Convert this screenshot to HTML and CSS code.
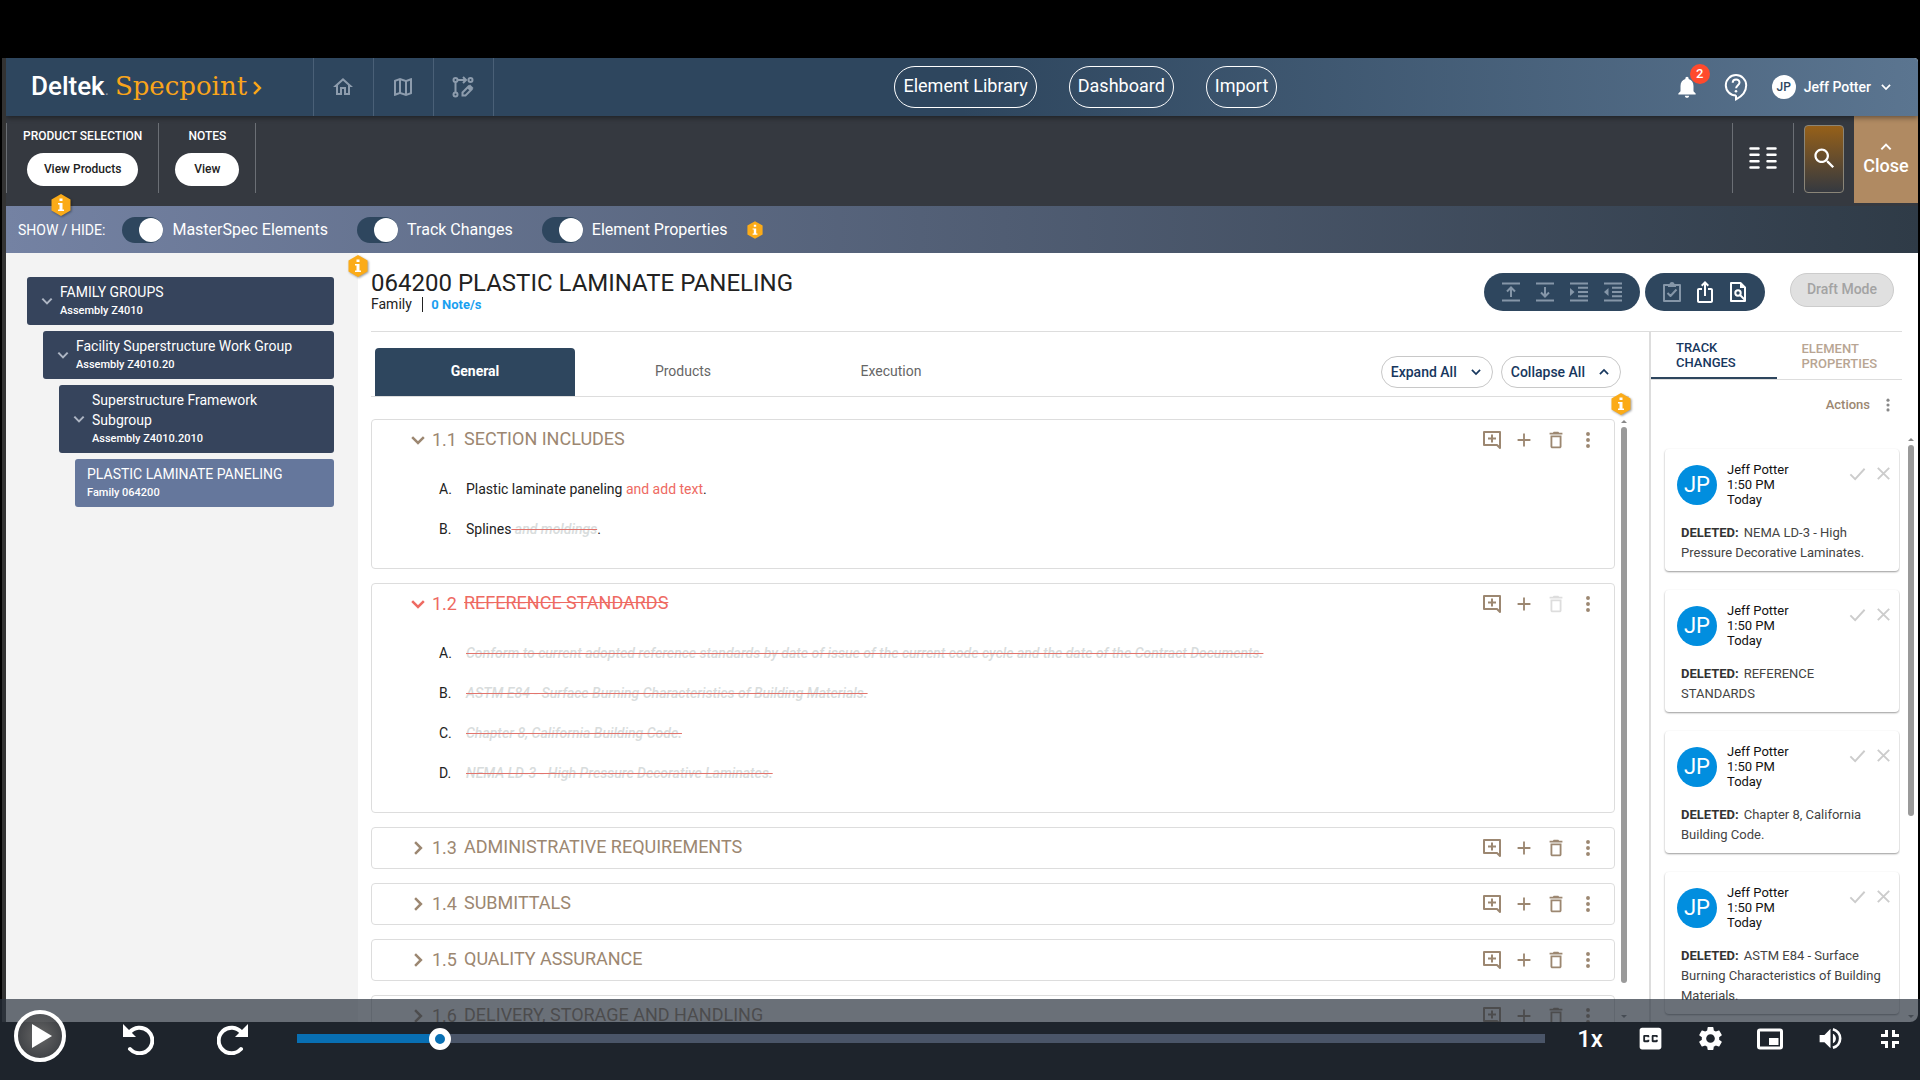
FILE: index.html
```html
<!DOCTYPE html>
<html lang="en">
<head>
    <meta charset="UTF-8">
    <meta name="viewport" content="width=device-width, initial-scale=1.0">
    <title>Deltek Specpoint</title>
    <link rel="stylesheet" href="styles.css">
</head>
<body>
    <!-- icon set -->
    <svg class="sprite" aria-hidden="true">
        <symbol id="i-home" viewBox="0 0 24 24"><path d="M12 5.69l5 4.5V18h-2v-6H9v6H7v-7.81l5-4.5M12 3L2 12h3v8h6v-6h2v6h6v-8h3L12 3z"/></symbol>
        <symbol id="i-map" viewBox="0 0 24 24"><path d="M20.5 3l-.16.03L15 5.1 9 3 3.36 4.9c-.21.07-.36.25-.36.48V20.5c0 .28.22.5.5.5l.16-.03L9 18.9l6 2.1 5.64-1.9c.21-.07.36-.25.36-.48V3.5c0-.28-.22-.5-.5-.5zM10 5.47l4 1.4v11.66l-4-1.4V5.47zm-5 .99l3-1.01v11.7l-3 1.16V6.46zm14 11.08l-3 1.01V6.86l3-1.16v11.84z"/></symbol>
        <symbol id="i-flow" viewBox="0 0 24 24"><g fill="none" stroke="currentColor" stroke-width="2"><circle cx="4.5" cy="5" r="2"/><circle cx="19.5" cy="5" r="2"/><circle cx="4.5" cy="19.500" r="2"/><path d="M4.500 7v10.500M7 5h7.500M12 2l3 3-3 3"/><path d="M11.500 20.500v-3l6-6 3 3-6 6zM16.500 12l3.500 3.500"/></g><path d="M17 11.500l2-2 3.500 3.500-2 2z"/></symbol>
        <symbol id="i-bell" viewBox="0 0 24 24"><path d="M12 22c1.1 0 2-.9 2-2h-4c0 1.1.9 2 2 2zm6-6v-5c0-3.070-1.630-5.640-4.500-6.320V4c0-.83-.67-1.500-1.500-1.500s-1.500.67-1.500 1.500v.68C7.640 5.360 6 7.920 6 11v5l-2 2v1h16v-1l-2-2z"/></symbol>
        <symbol id="i-help" viewBox="0 0 24 28"><g fill="none" stroke="currentColor" stroke-width="2"><path d="M12 22.500A10.200 10.200 0 1 1 22.200 12.300c0 6-4 11-10.200 14v-4"/><path d="M8.700 9.800c0-4.500 6.800-4.300 6.800-.3 0 2.600-3.400 2.800-3.400 5.800"/></g><circle cx="12" cy="18.300" r="1.300"/></symbol>
        <symbol id="i-down" viewBox="0 0 24 24"><path fill="none" stroke="currentColor" stroke-width="3" d="M5 8.500l7 7 7-7"/></symbol>
        <symbol id="i-up" viewBox="0 0 24 24"><path fill="none" stroke="currentColor" stroke-width="3" d="M5 15.500l7-7 7 7"/></symbol>
        <symbol id="i-right" viewBox="0 0 24 24"><path fill="none" stroke="currentColor" stroke-width="3" d="M8.500 5l7 7-7 7"/></symbol>
        <symbol id="i-columns" viewBox="0 0 28 22"><path fill="none" stroke="currentColor" stroke-width="2.500" stroke-linecap="round" d="M1.500 1.500h8M1.500 7.800h8M1.500 14.200h8M1.500 20.500h8M18.500 1.500h8M18.500 7.800h8M18.500 14.200h8M18.500 20.500h8"/></symbol>
        <symbol id="i-search" viewBox="0 0 24 24"><path d="M15.500 14h-.79l-.28-.27C15.410 12.590 16 11.110 16 9.500 16 5.910 13.090 3 9.500 3S3 5.910 3 9.500 5.910 16 9.500 16c1.610 0 3.090-.59 4.230-1.570l.27.28v.79l5 4.990L20.490 19l-4.990-5zm-6 0C7.010 14 5 11.990 5 9.500S7.010 5 9.500 5 14 7.010 14 9.500 11.990 14 9.500 14z"/></symbol>
        <symbol id="i-insert-above" viewBox="0 0 20 20"><path fill="none" stroke="currentColor" stroke-width="2" d="M1 1.500h18M1 18.500h18M10 15V6M6 9.500l4-4 4 4"/></symbol>
        <symbol id="i-insert-below" viewBox="0 0 20 20"><path fill="none" stroke="currentColor" stroke-width="2" d="M1 1.500h18M1 18.500h18M10 5v9M6 10.500l4 4 4-4"/></symbol>
        <symbol id="i-indent" viewBox="0 0 20 20"><path fill="none" stroke="currentColor" stroke-width="2" d="M1 1.500h18M9 5.800h10M9 10h10M9 14.200h10M1 18.500h18"/><path d="M1 6l4.500 4L1 14z"/></symbol>
        <symbol id="i-outdent" viewBox="0 0 20 20"><path fill="none" stroke="currentColor" stroke-width="2" d="M1 1.500h18M9 5.800h10M9 10h10M9 14.200h10M1 18.500h18"/><path d="M5.500 6L1 10l4.500 4z"/></symbol>
        <symbol id="i-task" viewBox="0 0 20 20"><path fill="none" stroke="currentColor" stroke-width="2" stroke-linejoin="round" d="M2 3h16v16H2zM5.500 11l3 3 6-6.500"/><path d="M6 3h8v2H6zM10 0a2.500 2.500 0 0 1 2.500 2.500h-5A2.500 2.500 0 0 1 10 0z"/></symbol>
        <symbol id="i-share" viewBox="0 0 24 24"><path d="M16 5l-1.420 1.420-1.590-1.590V16h-1.980V4.830L9.420 6.420 8 5l4-4 4 4zm4 5v11c0 1.100-.9 2-2 2H6c-1.110 0-2-.9-2-2V10c0-1.110.89-2 2-2h3v2H6v11h12V10h-3V8h3c1.100 0 2 .89 2 2z"/></symbol>
        <symbol id="i-find" viewBox="0 0 20 20"><g fill="none" stroke="currentColor" stroke-width="2" stroke-linejoin="round"><path d="M3 1h9.500L17 5.500V19H3z"/><circle cx="10" cy="11" r="2.700"/><path d="M12 13l4.500 4.500"/></g><path d="M12 1l5 5h-5z"/></symbol>
        <symbol id="i-comment" viewBox="-1 -1 22 22"><path fill="none" stroke="currentColor" stroke-width="2" stroke-linejoin="round" d="M2 2h16v16l-3-3H2zM10 4.500v8M6 8.500h8"/></symbol>
        <symbol id="i-plus" viewBox="0 0 24 24"><path d="M19 13h-6v6h-2v-6H5v-2h6V5h2v6h6v2z"/></symbol>
        <symbol id="i-trash" viewBox="0 0 24 24"><path d="M6 19c0 1.100.9 2 2 2h8c1.100 0 2-.9 2-2V7H6v12zM8 9h8v10H8V9zm7.500-5l-1-1h-5l-1 1H5v2h14V4h-3.500z"/></symbol>
        <symbol id="i-more" viewBox="0 0 24 24"><circle cx="12" cy="5.500" r="2.100"/><circle cx="12" cy="12" r="2.100"/><circle cx="12" cy="18.500" r="2.100"/></symbol>
        <symbol id="i-check" viewBox="0 0 20 20"><path fill="none" stroke="currentColor" stroke-width="2" d="M2.500 11l5 5L17.500 5"/></symbol>
        <symbol id="i-x" viewBox="0 0 20 20"><path fill="none" stroke="currentColor" stroke-width="2" d="M4 4l12 12M16 4L4 16"/></symbol>
        <symbol id="i-info" viewBox="0 0 20 22"><path fill="#fbab18" d="M10 0l9.500 5.500v11L10 22 .5 16.500v-11z"/><path fill="#fff" d="M8.500 4.500h3v2.500h-3zM7 9h4.500v6.500H13V17H7v-1.500h1.500v-5H7z"/></symbol>
        <symbol id="i-play" viewBox="0 0 20 24"><path d="M0 0l20 12L0 24z"/></symbol>
        <symbol id="i-back" viewBox="0 0 32 32"><path fill="none" stroke="currentColor" stroke-width="4" stroke-linecap="round" d="M7.500 9.500a12.800 12.800 0 1 1 .5 16.500"/><path d="M1 1v13h13z"/></symbol>
        <symbol id="i-forward" viewBox="0 0 32 32"><path fill="none" stroke="currentColor" stroke-width="4" stroke-linecap="round" d="M24.500 9.500a12.800 12.800 0 1 0-.5 16.500"/><path d="M31 1v13H18z"/></symbol>
        <symbol id="i-cc" viewBox="0 0 24 24"><path d="M19 3H5c-1.110 0-2 .9-2 2v14c0 1.100.89 2 2 2h14c1.100 0 2-.9 2-2V5c0-1.100-.9-2-2-2zm-8 8H9.500v-.5h-2v3h2V13H11v1c0 .55-.45 1-1 1H7c-.55 0-1-.45-1-1v-4c0-.55.45-1 1-1h3c.55 0 1 .45 1 1v1zm7 0h-1.500v-.5h-2v3h2V13H18v1c0 .55-.45 1-1 1h-3c-.55 0-1-.45-1-1v-4c0-.55.45-1 1-1h3c.55 0 1 .45 1 1v1z"/></symbol>
        <symbol id="i-gear" viewBox="0 0 24 24"><path d="M19.140 12.940c.04-.3.06-.61.06-.94 0-.32-.02-.64-.07-.94l2.030-1.580c.18-.14.23-.41.12-.61l-1.920-3.320c-.12-.22-.37-.29-.59-.22l-2.390.96c-.5-.38-1.030-.7-1.620-.94l-.36-2.540c-.04-.24-.24-.41-.48-.41h-3.840c-.24 0-.43.17-.47.41l-.36 2.540c-.59.24-1.130.57-1.620.94l-2.390-.96c-.22-.08-.47 0-.59.22L2.740 8.870c-.12.21-.08.47.12.61l2.030 1.580c-.05.3-.09.63-.09.94s.02.64.07.94l-2.030 1.580c-.18.14-.23.41-.12.61l1.920 3.320c.12.22.37.29.59.22l2.390-.96c.5.38 1.030.7 1.620.94l.36 2.540c.05.24.24.41.48.41h3.840c.24 0 .44-.17.47-.41l.36-2.540c.59-.24 1.130-.56 1.620-.94l2.390.96c.22.08.47 0 .59-.22l1.920-3.320c.12-.22.07-.47-.12-.61l-2.010-1.580zM12 15.600c-1.980 0-3.600-1.620-3.600-3.600s1.620-3.600 3.600-3.600 3.600 1.620 3.600 3.600-1.620 3.600-3.600 3.600z"/></symbol>
        <symbol id="i-pip" viewBox="0 0 26 22"><rect x="1.500" y="2" width="23" height="18" rx="1.500" fill="none" stroke="currentColor" stroke-width="3"/><path d="M12 10h9.500v7H12z"/></symbol>
        <symbol id="i-volume" viewBox="0 0 24 24"><path d="M3 9v6h4l5 5V4L7 9H3zm13.500 3c0-1.770-1.020-3.290-2.500-4.030v8.050c1.480-.73 2.500-2.250 2.500-4.020z"/><path fill="none" stroke="currentColor" stroke-width="2.200" d="M14 4.300c3.500 1 6 4 6 7.700s-2.500 6.700-6 7.700"/></symbol>
        <symbol id="i-exit" viewBox="0 0 18 18"><path fill="none" stroke="currentColor" stroke-width="3" d="M0 5.500h5.500V0M18 5.500h-5.500V0M0 12.500h5.500V18M18 12.500h-5.500V18"/></symbol>
    </svg>

    <div class="app">
        <header class="header">
            <a class="logo" href="#"><span class="logo-deltek">Deltek</span><span class="logo-dot">.</span><span class="logo-specpoint">Specpoint</span><svg class="logo-arrow"><use href="#i-right"/></svg></a>
            <nav class="icon-nav">
                <a href="#" aria-label="Home"><svg class="icon-24"><use href="#i-home"/></svg></a>
                <a href="#" aria-label="Map"><svg class="icon-24"><use href="#i-map"/></svg></a>
                <a href="#" aria-label="Workflow"><svg class="icon-24"><use href="#i-flow"/></svg></a>
            </nav>
            <div class="header-links">
                <button>Element Library</button>
                <button>Dashboard</button>
                <button>Import</button>
            </div>
            <div class="user-area">
                <button class="bell" aria-label="Notifications"><svg><use href="#i-bell"/></svg><span class="badge">2</span></button>
                <button class="help" aria-label="Help"><svg><use href="#i-help"/></svg></button>
                <button class="user"><span class="user-initials">JP</span>Jeff Potter<svg class="icon-14"><use href="#i-down"/></svg></button>
            </div>
        </header>

        <div class="toolbar">
            <div class="tool-group">
                <span>PRODUCT SELECTION</span>
                <button>View Products</button>
                <svg class="info info-products"><use href="#i-info"/></svg>
            </div>
            <div class="tool-group">
                <span>NOTES</span>
                <button>View</button>
            </div>
            <div class="toolbar-right">
                <button class="columns" aria-label="Columns"><svg><use href="#i-columns"/></svg></button>
                <button class="search" aria-label="Search"><svg><use href="#i-search"/></svg></button>
                <button class="close"><svg class="icon-16"><use href="#i-up"/></svg>Close</button>
            </div>
        </div>

        <div class="show-hide">
            <span class="show-hide-title">SHOW / HIDE:</span>
            <label><input type="checkbox" checked>MasterSpec Elements</label>
            <label><input type="checkbox" checked>Track Changes</label>
            <label><input type="checkbox" checked>Element Properties</label>
            <svg class="info-small"><use href="#i-info"/></svg>
        </div>

        <div class="content">
            <aside class="sidebar">
                <a href="#" class="node level-1"><svg class="icon-16"><use href="#i-down"/></svg><span class="node-text">FAMILY GROUPS<small>Assembly Z4010</small></span></a>
                <a href="#" class="node level-2"><svg class="icon-16"><use href="#i-down"/></svg><span class="node-text">Facility Superstructure Work Group<small>Assembly Z4010.20</small></span></a>
                <a href="#" class="node level-3"><svg class="icon-16"><use href="#i-down"/></svg><span class="node-text">Superstructure Framework Subgroup<small>Assembly Z4010.2010</small></span></a>
                <a href="#" class="node level-4"><span class="node-text">PLASTIC LAMINATE PANELING<small>Family 064200</small></span></a>
            </aside>

            <main class="main">
                <svg class="info info-main"><use href="#i-info"/></svg>
                <div class="main-header">
                    <div class="title">
                        <h1>064200 PLASTIC LAMINATE PANELING</h1>
                        <p>Family <a href="#">0 Note/s</a></p>
                    </div>
                    <div class="pill pill-wide">
                        <button disabled aria-label="Insert above"><svg><use href="#i-insert-above"/></svg></button>
                        <button disabled aria-label="Insert below"><svg><use href="#i-insert-below"/></svg></button>
                        <button disabled aria-label="Demote"><svg><use href="#i-indent"/></svg></button>
                        <button disabled aria-label="Promote"><svg><use href="#i-outdent"/></svg></button>
                    </div>
                    <div class="pill">
                        <button disabled aria-label="Accept all"><svg><use href="#i-task"/></svg></button>
                        <button aria-label="Export"><svg class="share"><use href="#i-share"/></svg></button>
                        <button aria-label="Preview"><svg><use href="#i-find"/></svg></button>
                    </div>
                    <button class="draft" disabled>Draft Mode</button>
                </div>

                <div class="workspace">
                    <div class="editor">
                        <div class="tabs">
                            <button class="tab active">General</button>
                            <button class="tab">Products</button>
                            <button class="tab">Execution</button>
                            <div class="expanders">
                                <button>Expand All<svg class="icon-14"><use href="#i-down"/></svg></button>
                                <button>Collapse All<svg class="icon-14"><use href="#i-up"/></svg></button>
                            </div>
                        </div>
                        <svg class="info info-editor"><use href="#i-info"/></svg>

                        <div class="scroll-area">
                            <div class="sections">
                                <section>
                                    <div class="section-head">
                                        <svg class="icon-20"><use href="#i-down"/></svg><span class="number">1.1</span><h2>SECTION INCLUDES</h2>
                                        <button aria-label="Add comment"><svg><use href="#i-comment"/></svg></button>
                                        <button aria-label="Add"><svg><use href="#i-plus"/></svg></button>
                                        <button aria-label="Delete"><svg><use href="#i-trash"/></svg></button>
                                        <button aria-label="More"><svg><use href="#i-more"/></svg></button>
                                    </div>
                                    <ol>
                                        <li><span>A.</span>Plastic laminate paneling <ins>and add text</ins>.</li>
                                        <li><span>B.</span>Splines<del> and moldings</del>.</li>
                                    </ol>
                                </section>
                                <section>
                                    <div class="section-head removed">
                                        <svg class="icon-20"><use href="#i-down"/></svg><span class="number">1.2</span><h2>REFERENCE STANDARDS</h2>
                                        <button aria-label="Add comment"><svg><use href="#i-comment"/></svg></button>
                                        <button aria-label="Add"><svg><use href="#i-plus"/></svg></button>
                                        <button aria-label="Delete" disabled><svg><use href="#i-trash"/></svg></button>
                                        <button aria-label="More"><svg><use href="#i-more"/></svg></button>
                                    </div>
                                    <ol>
                                        <li><span>A.</span><del>Conform to current adopted reference standards by date of issue of the current code cycle and the date of the Contract Documents.</del></li>
                                        <li><span>B.</span><del>ASTM E84 - Surface Burning Characteristics of Building Materials.</del></li>
                                        <li><span>C.</span><del>Chapter 8, California Building Code.</del></li>
                                        <li><span>D.</span><del>NEMA LD-3 - High Pressure Decorative Laminates.</del></li>
                                    </ol>
                                </section>
                                <section>
                                    <div class="section-head">
                                        <svg class="icon-20"><use href="#i-right"/></svg><span class="number">1.3</span><h2>ADMINISTRATIVE REQUIREMENTS</h2>
                                        <button aria-label="Add comment"><svg><use href="#i-comment"/></svg></button>
                                        <button aria-label="Add"><svg><use href="#i-plus"/></svg></button>
                                        <button aria-label="Delete"><svg><use href="#i-trash"/></svg></button>
                                        <button aria-label="More"><svg><use href="#i-more"/></svg></button>
                                    </div>
                                </section>
                                <section>
                                    <div class="section-head">
                                        <svg class="icon-20"><use href="#i-right"/></svg><span class="number">1.4</span><h2>SUBMITTALS</h2>
                                        <button aria-label="Add comment"><svg><use href="#i-comment"/></svg></button>
                                        <button aria-label="Add"><svg><use href="#i-plus"/></svg></button>
                                        <button aria-label="Delete"><svg><use href="#i-trash"/></svg></button>
                                        <button aria-label="More"><svg><use href="#i-more"/></svg></button>
                                    </div>
                                </section>
                                <section>
                                    <div class="section-head">
                                        <svg class="icon-20"><use href="#i-right"/></svg><span class="number">1.5</span><h2>QUALITY ASSURANCE</h2>
                                        <button aria-label="Add comment"><svg><use href="#i-comment"/></svg></button>
                                        <button aria-label="Add"><svg><use href="#i-plus"/></svg></button>
                                        <button aria-label="Delete"><svg><use href="#i-trash"/></svg></button>
                                        <button aria-label="More"><svg><use href="#i-more"/></svg></button>
                                    </div>
                                </section>
                                <section>
                                    <div class="section-head">
                                        <svg class="icon-20"><use href="#i-right"/></svg><span class="number">1.6</span><h2>DELIVERY, STORAGE AND HANDLING</h2>
                                        <button aria-label="Add comment"><svg><use href="#i-comment"/></svg></button>
                                        <button aria-label="Add"><svg><use href="#i-plus"/></svg></button>
                                        <button aria-label="Delete"><svg><use href="#i-trash"/></svg></button>
                                        <button aria-label="More"><svg><use href="#i-more"/></svg></button>
                                    </div>
                                </section>
                            </div>
                            <div class="scrollbar"><i class="thumb thumb-sections"></i></div>
                        </div>
                    </div>

                    <aside class="changes">
                        <div class="change-tabs">
                            <button class="active">TRACK CHANGES</button>
                            <button>ELEMENT PROPERTIES</button>
                        </div>
                        <div class="actions"><button>Actions<svg><use href="#i-more"/></svg></button></div>
                        <div class="change-scroll">
                            <div class="change-list">
                                <article>
                                    <div class="change-head">
                                        <span class="avatar">JP</span>
                                        <p>Jeff Potter<br>1:50 PM<br>Today</p>
                                        <button aria-label="Accept"><svg><use href="#i-check"/></svg></button>
                                        <button aria-label="Reject"><svg><use href="#i-x"/></svg></button>
                                    </div>
                                    <p class="change-text"><b>DELETED:</b>NEMA LD-3 - High Pressure Decorative Laminates.</p>
                                </article>
                                <article>
                                    <div class="change-head">
                                        <span class="avatar">JP</span>
                                        <p>Jeff Potter<br>1:50 PM<br>Today</p>
                                        <button aria-label="Accept"><svg><use href="#i-check"/></svg></button>
                                        <button aria-label="Reject"><svg><use href="#i-x"/></svg></button>
                                    </div>
                                    <p class="change-text"><b>DELETED:</b>REFERENCE STANDARDS</p>
                                </article>
                                <article>
                                    <div class="change-head">
                                        <span class="avatar">JP</span>
                                        <p>Jeff Potter<br>1:50 PM<br>Today</p>
                                        <button aria-label="Accept"><svg><use href="#i-check"/></svg></button>
                                        <button aria-label="Reject"><svg><use href="#i-x"/></svg></button>
                                    </div>
                                    <p class="change-text"><b>DELETED:</b>Chapter 8, California Building Code.</p>
                                </article>
                                <article>
                                    <div class="change-head">
                                        <span class="avatar">JP</span>
                                        <p>Jeff Potter<br>1:50 PM<br>Today</p>
                                        <button aria-label="Accept"><svg><use href="#i-check"/></svg></button>
                                        <button aria-label="Reject"><svg><use href="#i-x"/></svg></button>
                                    </div>
                                    <p class="change-text"><b>DELETED:</b>ASTM E84 - Surface Burning Characteristics of Building Materials.</p>
                                </article>
                            </div>
                            <div class="scrollbar"><i class="thumb thumb-changes"></i></div>
                        </div>
                    </aside>
                </div>
            </main>
        </div>
    </div>

    <!-- video controls -->
    <div class="player">
        <button class="play" aria-label="Play"><svg><use href="#i-play"/></svg></button>
        <button class="skip" aria-label="Rewind"><svg><use href="#i-back"/></svg></button>
        <button class="skip" aria-label="Forward"><svg><use href="#i-forward"/></svg></button>
        <input class="seek" type="range" min="0" max="1000" value="108" aria-label="Seek">
        <button class="control">1x</button>
        <button class="control" aria-label="Captions"><svg class="icon-29"><use href="#i-cc"/></svg></button>
        <button class="control" aria-label="Settings"><svg class="icon-29"><use href="#i-gear"/></svg></button>
        <button class="control" aria-label="Picture in picture"><svg class="pip"><use href="#i-pip"/></svg></button>
        <button class="control" aria-label="Volume"><svg class="icon-29"><use href="#i-volume"/></svg></button>
        <button class="control" aria-label="Exit fullscreen"><svg class="icon-18"><use href="#i-exit"/></svg></button>
    </div>
</body>
</html>
```

FILE: styles.css
```css
* {
    box-sizing: border-box;
}

body {
    margin: 0;
    padding: 58px 2px 58px 2px;
    height: 100vh;
    overflow: hidden;
    position: relative;
    background: #000;
    color: #222;
    font-family: Roboto, "Liberation Sans", sans-serif;
    font-size: 14px;
}

button {
    margin: 0;
    padding: 0;
    border: none;
    background: none;
    color: inherit;
    font: inherit;
    cursor: pointer;
}

a {
    color: inherit;
    text-decoration: none;
}

h1, h2, p, ol {
    margin: 0;
    padding: 0;
    font-weight: 400;
}

svg {
    display: block;
    flex: none;
    fill: currentColor;
}

.sprite {
    position: absolute;
    width: 0;
    height: 0;
}

.icon-14 { width: 14px; height: 14px; }
.icon-16 { width: 16px; height: 16px; }
.icon-18 { width: 18px; height: 18px; }
.icon-20 { width: 20px; height: 20px; }
.icon-24 { width: 24px; height: 24px; }
.icon-29 { width: 29px; height: 29px; }

.app {
    display: flex;
    flex-direction: column;
    height: 100%;
    border-left: 4px solid #333;
    border-radius: 0 4px 8px 0;
    overflow: hidden;
    background: #fff;
}

/* header */
.header {
    display: flex;
    align-items: center;
    flex: none;
    height: 58px;
    padding-right: 25px;
    background: linear-gradient(90deg, #2e465e 50%, #5b7590);
    color: #fff;
    position: relative;
    box-shadow: 0 2px 5px rgba(0, 0, 0, 0.4);
}

.logo {
    display: flex;
    align-items: center;
    width: 307px;
    padding: 0 0 2px 25px;
    font-size: 26px;
}

.logo-deltek {
    font-weight: 500;
}

.logo-dot {
    color: #8d9cad;
    font-size: 16px;
    padding: 6px 6px 0 0;
}

.logo-specpoint {
    color: #f9a51a;
    font-family: "DejaVu Serif", serif;
    font-size: 26px;
}

.logo-arrow {
    width: 20px;
    height: 20px;
    margin-top: 4px;
    color: #f9a51a;
}

.icon-nav {
    display: flex;
    height: 100%;
    margin-right: 4px;
    border-left: 1px solid #4a6077;
    color: #8d9cad;
}

.icon-nav a {
    display: flex;
    align-items: center;
    justify-content: center;
    width: 60px;
    padding-right: 2px;
    border-right: 1px solid #4a6077;
}

.header-links {
    display: flex;
    gap: 32px;
    margin: 0 auto;
}

.header-links button {
    height: 42px;
    padding: 0 8px 4px;
    border: 1px solid #fff;
    border-radius: 21px;
    font-size: 18px;
}

.user-area {
    display: flex;
    align-items: center;
    gap: 24px;
}

.bell {
    position: relative;
}

.bell svg {
    width: 26px;
    height: 26px;
}

.badge {
    position: absolute;
    top: -10px;
    left: 16px;
    width: 20px;
    height: 20px;
    border-radius: 50%;
    background: #ff4a2d;
    font-size: 13px;
    font-weight: 500;
    line-height: 20px;
}

.help svg {
    width: 24px;
    height: 28px;
}

.user {
    display: flex;
    align-items: center;
    gap: 8px;
    font-weight: 500;
}

.user-initials {
    width: 24px;
    height: 24px;
    border-radius: 50%;
    background: #fff;
    color: #2e465e;
    font-size: 12px;
    line-height: 24px;
}

/* toolbar */
.toolbar {
    display: flex;
    flex: none;
    height: 90px;
    padding-top: 7px;
    background: #353940;
    color: #fff;
}

.tool-group {
    display: flex;
    flex-direction: column;
    align-items: center;
    gap: 9px;
    position: relative;
    height: 70px;
    padding: 5px 16px 0;
    border-right: 1px solid #6b6f75;
    font-size: 12px;
    font-weight: 500;
    line-height: 16px;
}

.tool-group:first-child {
    border-left: 1px solid #6b6f75;
}

.tool-group button {
    height: 33px;
    padding: 0 17px 2px;
    border-radius: 17px;
    background: #fff;
    color: #222;
}

.tool-group:nth-child(2) button {
    padding: 0 19px 2px;
}

.info {
    position: absolute;
    width: 20px;
    height: 22px;
    filter: drop-shadow(1px 1px 1px rgba(0, 0, 0, 0.4));
    z-index: 2;
}

.info-products {
    top: 71px;
    left: 44px;
}

.toolbar-right {
    display: flex;
    margin-left: auto;
}

.columns {
    display: flex;
    align-items: center;
    justify-content: center;
    width: 62px;
    height: 70px;
    border: 1px solid #6b6f75;
    border-width: 0 1px;
}

.columns svg {
    width: 28px;
    height: 22px;
}

.search {
    display: flex;
    align-items: center;
    justify-content: center;
    width: 40px;
    height: 68px;
    margin: 2px 10px 0;
    padding-bottom: 2px;
    border: 1px solid #8a8578;
    border-radius: 4px;
    background: linear-gradient(#966019, #353940);
}

.search svg {
    width: 27px;
    height: 27px;
}

.close {
    display: flex;
    flex-direction: column;
    align-items: center;
    justify-content: center;
    width: 64px;
    height: 87px;
    margin-top: -7px;
    padding-bottom: 4px;
    background: #b08a62;
    font-size: 18px;
    font-weight: 500;
}

/* show / hide bar */
.show-hide {
    display: flex;
    align-items: center;
    flex: none;
    height: 47px;
    padding-left: 12px;
    background: linear-gradient(90deg, #7482a3, #2f3b47);
    color: #fff;
    font-size: 16px;
}

.show-hide-title {
    margin-right: 17px;
    font-size: 14px;
}

.show-hide label {
    display: flex;
    align-items: center;
    gap: 9px;
    margin-right: 29px;
}

.show-hide input {
    appearance: none;
    width: 41px;
    height: 26px;
    margin: 0;
    padding: 1px 0;
    border-radius: 13px;
    background: #2e465e;
}

.show-hide input::before {
    content: "";
    display: block;
    width: 24px;
    height: 24px;
    margin-left: auto;
    border-radius: 50%;
    background: #fff;
}

.info-small {
    width: 16px;
    height: 18px;
    margin-left: -9px;
}

/* content */
.content {
    display: flex;
    flex: 1;
    min-height: 0;
}

.sidebar {
    display: flex;
    flex-direction: column;
    gap: 6px;
    flex: none;
    width: 352px;
    padding: 24px 24px 0 21px;
    background: #f3f3f3;
}

.node {
    display: flex;
    align-items: center;
    gap: 5px;
    padding: 5px 24px 5px 12px;
    border-radius: 3px;
    background: #36445c;
    color: #fff;
    line-height: 20px;
}

.node svg {
    color: #aeb6c4;
}

.node small {
    display: block;
    font-size: 11px;
    font-weight: 500;
    line-height: 18px;
}

.level-2 { margin-left: 16px; }
.level-3 { margin-left: 32px; }
.level-4 { margin-left: 48px; background: #65779c; }

.main {
    display: flex;
    flex-direction: column;
    flex: 1;
    min-width: 0;
    position: relative;
    padding-left: 13px;
}

.info-main {
    top: 2px;
    left: -10px;
}

.main-header {
    display: flex;
    align-items: flex-start;
    flex: none;
    height: 79px;
    margin-right: 16px;
    padding: 20px 8px 0 0;
    border-bottom: 1px solid #ddd;
}

.title {
    flex: 1;
    margin-top: -4px;
}

.title h1 {
    font-size: 24px;
    line-height: 28px;
}

.title p {
    line-height: 14px;
}

.title a {
    margin-left: 7px;
    padding-left: 8px;
    border-left: 1px solid #222;
    color: #1a9ff0;
    font-size: 13px;
    font-weight: 700;
}

.pill {
    display: flex;
    align-items: center;
    justify-content: center;
    gap: 13px;
    width: 120px;
    height: 38px;
    margin-right: 25px;
    border-radius: 19px;
    background: #2e465e;
    color: #fff;
}

.pill-wide {
    gap: 14px;
    width: 156px;
    margin-right: 5px;
}

.pill button:disabled {
    color: #8596a8;
}

.pill svg {
    width: 20px;
    height: 20px;
}

.pill .share {
    height: 24px;
    width: 24px;
    margin: 0 -2px;
}

.draft {
    height: 34px;
    padding: 0 16px 2px;
    border: 1px solid #ccc;
    border-radius: 17px;
    background: #e0e0e0;
    color: #a3a3a3;
    font-weight: 500;
}

.workspace {
    display: flex;
    flex: 1;
    min-height: 0;
}

.editor {
    display: flex;
    flex-direction: column;
    flex: 1;
    min-width: 0;
    position: relative;
    padding-right: 20px;
}

.tabs {
    display: flex;
    align-items: flex-end;
    flex: none;
    height: 65px;
    border-bottom: 1px solid #ddd;
}

.tab {
    width: 200px;
    height: 48px;
    margin: 0 4px;
    padding-bottom: 2px;
    border-radius: 4px 4px 0 0;
    color: #666;
}

.tab.active {
    background: #2e465e;
    color: #fff;
    font-weight: 700;
}

.expanders {
    display: flex;
    gap: 8px;
    margin: 0 8px 8px auto;
}

.expanders button {
    display: flex;
    align-items: center;
    gap: 12px;
    height: 32px;
    padding: 0 9px;
    border: 1px solid #c8c8c8;
    border-radius: 16px;
    color: #17375e;
    font-weight: 500;
}

.info-editor {
    top: 61px;
    right: 18px;
}

.scroll-area {
    display: flex;
    flex: 1;
    min-height: 0;
    gap: 6px;
    margin-top: 22px;
    padding-right: 2px;
}

.sections {
    display: flex;
    flex-direction: column;
    gap: 14px;
    flex: 1;
    min-width: 0;
    overflow: hidden;
}

section {
    flex: none;
    border: 1px solid #ddd;
    border-radius: 4px;
}

.section-head {
    display: flex;
    align-items: center;
    height: 40px;
    padding: 0 10px 0 36px;
    color: #9c8771;
    font-size: 18px;
}

.section-head .number {
    width: 32px;
    margin-left: 4px;
    padding-bottom: 1px;
}

.section-head h2 {
    flex: 1;
    padding-bottom: 3px;
    font-size: 18px;
}

.section-head button {
    display: flex;
    justify-content: center;
    width: 32px;
}

.section-head button svg {
    width: 22px;
    height: 22px;
}

.section-head button:disabled {
    color: #ddd;
}

.removed > svg,
.removed .number,
.removed h2 {
    color: #ee6a62;
}

.removed h2 {
    text-decoration: line-through;
}

ol {
    list-style: none;
    padding: 9px 16px 19px 67px;
}

li {
    line-height: 40px;
}

li span {
    display: inline-block;
    width: 27px;
}

ins {
    color: #ee6a62;
    text-decoration: none;
}

del {
    color: #d8dcdc;
    font-style: italic;
    font-weight: 500;
    text-decoration: line-through #e2746d;
}

/* scrollbars */
.scrollbar {
    display: flex;
    flex-direction: column;
    flex: none;
    width: 6px;
    padding: 1px 0 4px;
}

.scrollbar::before,
.scrollbar::after {
    content: "";
    border: 3px solid transparent;
}

.scrollbar::before {
    border-top: 0;
    border-bottom: 3px solid #888;
    margin-bottom: 4px;
}

.scrollbar::after {
    border-bottom: 0;
    border-top: 3px solid #888;
    margin-top: auto;
}

.thumb {
    border-radius: 3px;
    background: #9a9a9a;
}

.thumb-sections { height: 93%; }
.thumb-changes { height: 64%; }

/* track changes panel */
.changes {
    display: flex;
    flex-direction: column;
    flex: none;
    width: 269px;
    border-left: 2px solid #ddd;
}

.change-tabs {
    display: flex;
    flex: none;
    height: 48px;
    margin-right: 16px;
    border-bottom: 1px solid #ddd;
}

.change-tabs button {
    flex: 1;
    padding: 0 20px 0 25px;
    color: #b8a593;
    font-size: 13px;
    font-weight: 500;
    line-height: 15px;
    text-align: left;
}

.change-tabs .active {
    border-bottom: 2px solid #2e465e;
    color: #17375e;
}

.actions {
    flex: none;
    height: 57px;
    padding: 15px 21px 0 0;
}

.actions button {
    display: flex;
    align-items: center;
    gap: 9px;
    margin-left: auto;
    color: #9c8771;
    font-size: 13px;
    font-weight: 500;
    line-height: 20px;
}

.actions svg {
    width: 18px;
    height: 18px;
    color: #888;
}

.change-scroll {
    display: flex;
    flex: 1;
    min-height: 0;
    gap: 8px;
    padding-right: 4px;
}

.change-list {
    display: flex;
    flex-direction: column;
    gap: 19px;
    flex: 1;
    padding: 12px 1px 0 14px;
    overflow: hidden;
}

article {
    flex: none;
    padding: 16px 6px 8px 12px;
    border-radius: 4px;
    box-shadow: 0 1px 2px rgba(0, 0, 0, 0.4);
}

.change-head {
    display: flex;
    align-items: flex-start;
    height: 41px;
}

.change-head p {
    flex: 1;
    margin: -3px 0 0 10px;
    color: #111;
    font-size: 13px;
    line-height: 15px;
}

.avatar {
    width: 40px;
    height: 40px;
    border-radius: 50%;
    background: #018edf;
    color: #fff;
    font-size: 22px;
    line-height: 40px;
    text-align: center;
}

.change-head button {
    margin: -1px 0 0 7px;
    color: #ccc;
}

.change-head button svg {
    width: 19px;
    height: 19px;
}

.change-text {
    padding: 17px 4px 0;
    color: #444;
    font-size: 13px;
    line-height: 20px;
}

.change-text b {
    margin-right: 5px;
    color: #333;
}

/* player */
.player {
    display: flex;
    align-items: center;
    position: absolute;
    right: 0;
    bottom: 0;
    left: 0;
    height: 81px;
    padding: 0 0 2px 14px;
    background: rgba(43, 51, 63, 0.7);
    color: #fff;
    z-index: 5;
}

.play {
    display: flex;
    align-items: center;
    justify-content: center;
    width: 52px;
    height: 52px;
    margin: 0 24px 6px 0;
    padding-left: 4px;
    border: 4px solid #fff;
    border-radius: 50%;
    background: radial-gradient(#666, rgba(60, 62, 66, 0.7));
}

.play svg {
    width: 20px;
    height: 24px;
}

.skip {
    display: flex;
    justify-content: center;
    width: 95px;
}

.skip svg {
    width: 32px;
    height: 32px;
}

.seek {
    appearance: none;
    flex: 1;
    height: 9px;
    margin: 0 15px 0 17px;
    background: linear-gradient(90deg, #086fb3 11%, #4a5568 11%);
}

.seek::-webkit-slider-thumb {
    appearance: none;
    width: 22px;
    height: 22px;
    border: 6px solid #fff;
    border-radius: 50%;
    background: #086fb3;
}

.control {
    display: flex;
    justify-content: center;
    width: 60px;
    font-size: 24px;
    font-weight: 500;
}

.pip {
    width: 26px;
    height: 22px;
}
```
